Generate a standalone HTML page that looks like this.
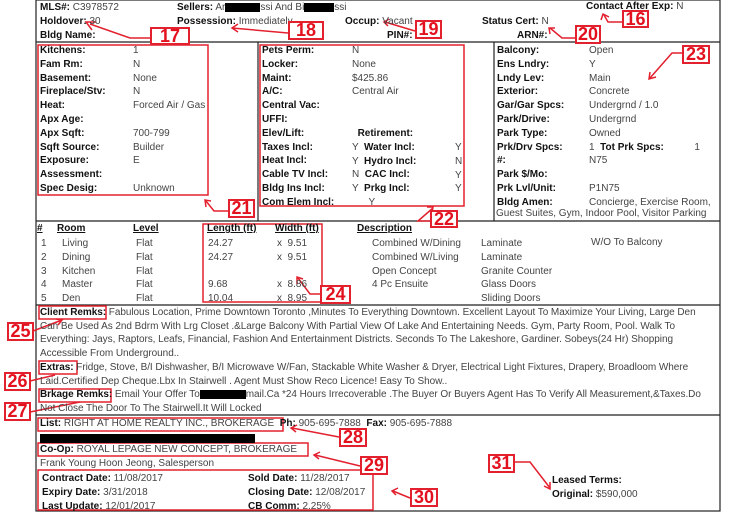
<!DOCTYPE html>
<html><head><meta charset="utf-8"><style>
*{margin:0;padding:0;box-sizing:border-box}
body{width:740px;height:528px;background:#fff;position:relative;overflow:hidden;font-family:"Liberation Sans",Arial,sans-serif;font-size:10px;color:#444}
.t{position:absolute;white-space:nowrap;line-height:12px}
b{color:#111;font-weight:bold}
.u{text-decoration:underline;color:#111;font-weight:bold}
.rl{position:absolute;border:2px solid #e3202e;background:#fff;color:#e3101e;font-weight:bold;font-size:18px;line-height:15px;text-align:center}
.bar{display:inline-block;background:#000;height:9px;vertical-align:middle}
svg{position:absolute;left:0;top:0}
</style></head><body>
<svg width="740" height="528">
<g stroke="#222" stroke-width="1.2" fill="none">
<rect x="36" y="0" width="684" height="511"/>
<line x1="36" y1="42" x2="720" y2="42"/>
<line x1="258" y1="42" x2="258" y2="221"/>
<line x1="494" y1="42" x2="494" y2="221"/>
<line x1="36" y1="221" x2="720" y2="221"/>
<line x1="36" y1="305" x2="720" y2="305"/>
<line x1="36" y1="415" x2="720" y2="415"/>
</g>
<g stroke="#e3202e" stroke-width="1.5" fill="none">
<rect x="38" y="45" width="170" height="150"/>
<rect x="260" y="45" width="204" height="161"/>
<rect x="203" y="224" width="119" height="78"/>
<rect x="39" y="306" width="67" height="13"/>
<rect x="39" y="361" width="38" height="13"/>
<rect x="39" y="389" width="72" height="13"/>
<rect x="38" y="418" width="245" height="13"/>
<rect x="38" y="443" width="270" height="13"/>
<rect x="38" y="470" width="335" height="40"/>
<polyline points="150,38 130,38 90,24"/><polyline points="92,30 86,22 96,22"/>
<polyline points="288,33 232,28"/><polyline points="238,24 232,28 238,32"/>
<polyline points="415,31 385,22"/><polyline points="389,19 384,22 388,26"/>
<polyline points="575,38 562,38 550,28"/><polyline points="550,34 549,28 555,28"/>
<polyline points="622,22 608,22 604,15"/><polyline points="601,20 603,14 609,17"/>
<polyline points="682,53 672,53 650,78"/><polyline points="650,72 649,79 656,77"/>
<polyline points="228,211 214,211 206,201"/><polyline points="206,207 205,200 211,201"/>
<polyline points="430,221 418,221 433,208"/><polyline points="427,207 433,207 432,213"/>
<polyline points="320,294 310,294 298,278"/><polyline points="297,284 297,277 303,279"/>
<polyline points="33,331 62,320"/><polyline points="56,319 62,320 58,325"/>
<polyline points="30,381 55,375"/>
<polyline points="30,412 80,402"/>
<polyline points="339,437 292,428"/><polyline points="297,425 291,428 296,432"/>
<polyline points="360,466 315,455"/><polyline points="320,452 314,455 319,459"/>
<polyline points="410,498 393,491"/><polyline points="398,488 392,491 396,495"/>
<polyline points="515,462 530,462 550,488"/><polyline points="544,486 550,489 550,482"/>
</g>
</svg>

<div class="t" style="left:40px;top:2px"><b>MLS#:</b> C3978572</div>
<div class="t" style="left:177px;top:2px"><b>Sellers:</b> Ar<span class="bar" style="width:35px"></span>ssi And Bi<span class="bar" style="width:30px"></span>ssi</div>
<div class="t" style="left:586px;top:1px"><b>Contact After Exp:</b> N</div>
<div class="t" style="left:40px;top:16px"><b>Holdover:</b> 30</div>
<div class="t" style="left:177px;top:16px"><b>Possession:</b> Immediately</div>
<div class="t" style="left:345px;top:16px"><b>Occup:</b> Vacant</div>
<div class="t" style="left:482px;top:16px"><b>Status Cert:</b> N</div>
<div class="t" style="left:40px;top:30px"><b>Bldg Name:</b></div>
<div class="t" style="left:387px;top:30px"><b>PIN#:</b></div>
<div class="t" style="left:517px;top:30px"><b>ARN#:</b></div>

<div class="t" style="left:40px;top:44px;line-height:13.8px"><b>Kitchens:</b><br><b>Fam Rm:</b><br><b>Basement:</b><br><b>Fireplace/Stv:</b><br><b>Heat:</b><br><b>Apx Age:</b><br><b>Apx Sqft:</b><br><b>Sqft Source:</b><br><b>Exposure:</b><br><b>Assessment:</b><br><b>Spec Desig:</b></div>
<div class="t" style="left:133px;top:44px;line-height:13.8px">1<br>N<br>None<br>N<br>Forced Air / Gas<br>&nbsp;<br>700-799<br>Builder<br>E<br>&nbsp;<br>Unknown</div>

<div class="t" style="left:262px;top:44px;line-height:13.8px"><b>Pets Perm:</b><br><b>Locker:</b><br><b>Maint:</b><br><b>A/C:</b><br><b>Central Vac:</b><br><b>UFFI:</b><br><b>Elev/Lift:</b><br><b>Taxes Incl:</b><br><b>Heat Incl:</b><br><b>Cable TV Incl:</b><br><b>Bldg Ins Incl:</b><br><b>Com Elem Incl:</b></div>
<div class="t" style="left:352px;top:44px;line-height:13.8px">N<br>None<br>$425.86<br>Central Air</div>
<div class="t" style="left:352px;top:127px;line-height:13.8px">&nbsp; <b>Retirement:</b><br>Y &nbsp;<b>Water Incl:</b><br>Y &nbsp;<b>Hydro Incl:</b><br>N &nbsp;<b>CAC Incl:</b><br>Y &nbsp;<b>Prkg Incl:</b><br>&nbsp; &nbsp; &nbsp; Y</div>
<div class="t" style="left:455px;top:141px;line-height:13.8px">Y<br>N<br>Y<br>Y</div>

<div class="t" style="left:497px;top:44px;line-height:13.8px"><b>Balcony:</b><br><b>Ens Lndry:</b><br><b>Lndy Lev:</b><br><b>Exterior:</b><br><b>Gar/Gar Spcs:</b><br><b>Park/Drive:</b><br><b>Park Type:</b><br><b>Prk/Drv Spcs:</b><br><b>#:</b><br><b>Park $/Mo:</b><br><b>Prk Lvl/Unit:</b><br><b>Bldg Amen:</b></div>
<div class="t" style="left:589px;top:44px;line-height:13.8px">Open<br>Y<br>Main<br>Concrete<br>Undergrnd / 1.0<br>Undergrnd<br>Owned<br>1 &nbsp;<b>Tot Prk Spcs:</b> &nbsp; &nbsp; &nbsp; &nbsp; &nbsp; 1<br>N75<br>&nbsp;<br>P1N75<br>Concierge, Exercise Room,</div>
<div class="t" style="left:496px;top:208px">Guest Suites, Gym, Indoor Pool, Visitor Parking</div>

<div class="t" style="left:37px;top:223px"><span class="u">#</span></div>
<div class="t" style="left:57px;top:223px"><span class="u">Room</span></div>
<div class="t" style="left:133px;top:223px"><span class="u">Level</span></div>
<div class="t" style="left:207px;top:223px"><span class="u">Length (ft)</span></div>
<div class="t" style="left:275px;top:223px"><span class="u">Width (ft)</span></div>
<div class="t" style="left:357px;top:223px"><span class="u">Description</span></div>
<div class="t" style="left:41px;top:237px;line-height:13.8px">1<br>2<br>3<br>4<br>5</div>
<div class="t" style="left:62px;top:237px;line-height:13.8px">Living<br>Dining<br>Kitchen<br>Master<br>Den</div>
<div class="t" style="left:136px;top:237px;line-height:13.8px">Flat<br>Flat<br>Flat<br>Flat<br>Flat</div>
<div class="t" style="left:208px;top:237px;line-height:13.8px">24.27<br>24.27<br>&nbsp;<br>9.68<br>10.04</div>
<div class="t" style="left:277px;top:237px;line-height:13.8px">x &nbsp;9.51<br>x &nbsp;9.51<br>&nbsp;<br>x &nbsp;8.86<br>x &nbsp;8.95</div>
<div class="t" style="left:372px;top:237px;line-height:13.8px">Combined W/Dining<br>Combined W/Living<br>Open Concept<br>4 Pc Ensuite</div>
<div class="t" style="left:481px;top:237px;line-height:13.8px">Laminate<br>Laminate<br>Granite Counter<br>Glass Doors<br>Sliding Doors</div>
<div class="t" style="left:591px;top:237px">W/O To Balcony</div>

<div class="t" style="left:40px;top:306px;line-height:13.7px;font-size:10px;letter-spacing:-0.05px"><b>Client Remks:</b> Fabulous Location, Prime Downtown Toronto ,Minutes To Everything Downtown. Excellent Layout To Maximize Your Living, Large Den<br>Can Be Used As 2nd Bdrm With Lrg Closet .&amp;Large Balcony With Partial View Of Lake And Entertaining Needs. Gym, Party Room, Pool. Walk To<br>Everything: Jays, Raptors, Leafs, Financial, Fashion And Entertainment Districts. Seconds To The Lakeshore, Gardiner. Sobeys(24 Hr) Shopping<br>Accessible From Underground..<br><b>Extras:</b> Fridge, Stove, B/I Dishwasher, B/I Microwave W/Fan, Stackable White Washer &amp; Dryer, Electrical Light Fixtures, Drapery, Broadloom Where<br>Laid.Certified Dep Cheque.Lbx In Stairwell . Agent Must Show Reco Licence! Easy To Show..<br><b>Brkage Remks:</b> Email Your Offer To<span class="bar" style="width:46px"></span>mail.Ca *24 Hours Irrecoverable .The Buyer Or Buyers Agent Has To Verify All Measurement,&amp;Taxes.Do<br>Not Close The Door To The Stairwell.It Will Locked</div>

<div class="t" style="left:40px;top:418px"><b>List:</b> RIGHT AT HOME REALTY INC., BROKERAGE &nbsp;<b>Ph:</b> 905-695-7888 &nbsp;<b>Fax:</b> 905-695-7888</div>
<div class="t" style="left:40px;top:433px"><span class="bar" style="width:215px"></span></div>
<div class="t" style="left:40px;top:444px"><b>Co-Op:</b> ROYAL LEPAGE NEW CONCEPT, BROKERAGE</div>
<div class="t" style="left:40px;top:458px">Frank Young Hoon Jeong, Salesperson</div>
<div class="t" style="left:42px;top:472px;line-height:13.8px"><b>Contract Date:</b> 11/08/2017<br><b>Expiry Date:</b> 3/31/2018<br><b>Last Update:</b> 12/01/2017</div>
<div class="t" style="left:248px;top:472px;line-height:13.8px"><b>Sold Date:</b> 11/28/2017<br><b>Closing Date:</b> 12/08/2017<br><b>CB Comm:</b> 2.25%</div>
<div class="t" style="left:552px;top:474px;line-height:14px"><b>Leased Terms:</b><br><b>Original:</b> $590,000</div>

<div class="rl" style="left:150px;top:27px;width:40px;height:18px">17</div>
<div class="rl" style="left:288px;top:21px;width:36px;height:19px">18</div>
<div class="rl" style="left:415px;top:20px;width:27px;height:19px">19</div>
<div class="rl" style="left:575px;top:25px;width:26px;height:19px">20</div>
<div class="rl" style="left:622px;top:10px;width:27px;height:18px">16</div>
<div class="rl" style="left:682px;top:45px;width:28px;height:19px">23</div>
<div class="rl" style="left:228px;top:199px;width:27px;height:19px">21</div>
<div class="rl" style="left:430px;top:210px;width:28px;height:18px">22</div>
<div class="rl" style="left:320px;top:285px;width:31px;height:19px">24</div>
<div class="rl" style="left:7px;top:322px;width:27px;height:19px">25</div>
<div class="rl" style="left:4px;top:372px;width:27px;height:19px">26</div>
<div class="rl" style="left:4px;top:402px;width:27px;height:19px">27</div>
<div class="rl" style="left:339px;top:428px;width:28px;height:19px">28</div>
<div class="rl" style="left:360px;top:456px;width:28px;height:19px">29</div>
<div class="rl" style="left:410px;top:488px;width:28px;height:19px">30</div>
<div class="rl" style="left:488px;top:454px;width:27px;height:19px">31</div>
</body></html>
